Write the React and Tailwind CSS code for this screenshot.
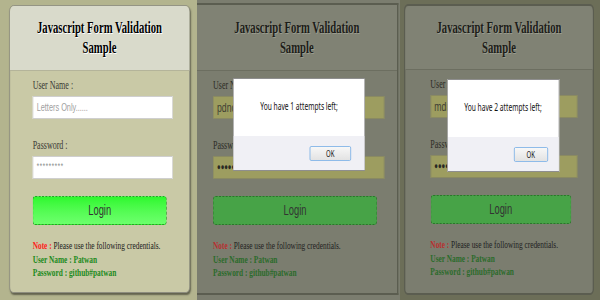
const serif = { fontFamily: '"Liberation Serif", "Times New Roman", serif' };

const panels = [
  {
    outer: 'w-[197px] bg-[#b3b48e]',
    inner: 'w-[295.5px]',
    card: 'ml-[13.5px] mt-[5px] w-[271.5px] h-[288px] rounded-[6px] border border-[#8b8b80] shadow-[1px_2px_2px_rgba(0,0,0,0.45)] bg-[#c9c9a6]',
    head: 'h-[65px] bg-[#d9dacb] border-b border-[#b4b49a] rounded-t-[6px]',
    title: 'text-black [text-shadow:1px_1px_0_#fff]',
    pad: 'px-[34.5px]',
    inputW: 'w-[210px]',
    btnW: 'w-[201px]',
    input: 'bg-white border border-[#cfcfcf]',
    btn: 'bg-gradient-to-b from-[#2cf82c] to-[#6cff6c] border-[#2b9b2b]',
    label: 'text-[#3a3a34]',
    red: 'text-[#ff1a1a]',
    green: 'text-[#1b8a1b]',
    body: 'text-[#1a1a1a]',
    user: '',
    userPh: 'Letters Only......',
    pass: null,
    dialog: null,
  },
  {
    outer: 'w-[203px] bg-[#7b7d6f]',
    inner: 'w-[304.5px]',
    card: 'ml-0 mt-[3px] w-[301.5px] h-[292px] border-t-2 border-b-2 border-r-2 border-[#5b5d50] bg-[#7b7d6f]',
    head: 'h-[66px] bg-[#808274] border-b border-[#6c6e60]',
    title: 'text-[#1d1d19] [text-shadow:1px_1px_0_#9a9c8e]',
    pad: 'px-[24px]',
    inputW: 'w-[256.5px]',
    btnW: 'w-[246px]',
    input: 'bg-[#9d9d60] border border-[#8a8a62]',
    btn: 'bg-[#47a347] border-[#2c742c]',
    label: 'text-[#2c2c26]',
    red: 'text-[#b83030]',
    green: 'text-[#2b6b2b]',
    body: 'text-[#222]',
    user: 'pdnc',
    userPh: '',
    pass: '●●●●●●',
    dialog: { box: 'left-[54px] w-[198px]', ok: 'ml-[114px] w-[61.5px]', n: 1 },
  },
  {
    outer: 'w-[200px] bg-[#6c6e58]',
    inner: 'w-[300px]',
    card: 'ml-[6px] mt-[4px] w-[285px] h-[291px] rounded-[6px] border-2 border-[#5b5d50] bg-[#7b7d6f]',
    head: 'h-[64px] bg-[#808274] border-b border-[#6c6e60] rounded-t-[6px]',
    title: 'text-[#1d1d19] [text-shadow:1px_1px_0_#9a9c8e]',
    pad: 'px-[37.5px]',
    inputW: 'w-[220px]',
    btnW: 'w-[211px]',
    input: 'bg-[#9d9d60] border border-[#8a8a62]',
    btn: 'bg-[#47a347] border-[#2c742c]',
    label: 'text-[#2c2c26]',
    red: 'text-[#b83030]',
    green: 'text-[#2b6b2b]',
    body: 'text-[#222]',
    user: 'mdn',
    userPh: '',
    pass: '●●●●●●',
    dialog: { box: 'left-[70.5px] w-[168px]', ok: 'ml-[99px] w-[51px]', n: 2 },
  },
];

function Dialog({ d }) {
  return (
    <div className={`absolute top-[75px] h-[93px] bg-white border border-[#8e8e8e] flex flex-col ${d.box}`}>
      <div className="h-[57px] pb-[2px] flex items-center justify-center text-[10px] text-[#111]">
        You have {d.n} attempts left;
      </div>
      <div className="flex-1 bg-[#f0f0f5] pt-[10px]">
        <div className={`h-[15px] border border-[#7ab0e6] rounded-[2px] bg-gradient-to-b from-[#f7f7f7] to-[#e3e3e3] flex items-center justify-center text-[9px] text-[#111] ${d.ok}`}>
          OK
        </div>
      </div>
    </div>
  );
}

function Panel({ p }) {
  return (
    <div className={`h-[300px] overflow-hidden shrink-0 ${p.outer}`}>
      <div className={`relative h-[300px] origin-top-left scale-x-[0.6667] ${p.inner}`}>
        <div className={p.card}>
          <div className={`flex items-center justify-center text-center ${p.head}`}>
            <h1 className={`text-[16px] leading-[20px] font-bold ${p.title}`} style={serif}>
              Javascript Form Validation
              <br />
              Sample
            </h1>
          </div>
          <div className={`pt-[7px] ${p.pad}`} style={serif}>
            <div className={`text-[12px] leading-[14px] ${p.label}`}>User Name :</div>
            <div
              className={`mt-[4px] h-[23px] flex items-center px-[5px] text-[13px] ${p.inputW} ${p.input}`}
              style={{ fontFamily: '"Liberation Sans", Arial, sans-serif' }}
            >
              {p.user ? (
                <span className="text-[#3e3e33]">{p.user}</span>
              ) : (
                <span className="text-[#a0a0a0] text-[11px]">{p.userPh}</span>
              )}
            </div>
            <div className={`mt-[19px] text-[12px] leading-[14px] ${p.label}`}>Password :</div>
            <div
              className={`mt-[4px] h-[23px] flex px-[5px] ${p.inputW} ${p.input}`}
              style={{ fontFamily: '"Liberation Sans", Arial, sans-serif' }}
            >
              {p.pass ? (
                <span className="self-center text-[9px] text-[#2a2a24]">{p.pass}</span>
              ) : (
                <span className="pt-[3px] text-[9px] text-[#888] tracking-[1px]">*********</span>
              )}
            </div>
            <button
              className={`mt-[17px] h-[29px] rounded-[4px] border border-dashed text-[14px] text-[#333] ${p.btnW} ${p.btn}`}
              style={{ fontFamily: '"Liberation Sans", Arial, sans-serif' }}
            >
              Login
            </button>
            <div className="mt-[14px] text-[11px] leading-[13.5px]">
              <p className={p.body}>
                <b className={p.red}>Note :</b> Please use the following credentials.
              </p>
              <p className={`font-bold ${p.green}`}>User Name : Patwan</p>
              <p className={`font-bold ${p.green}`}>Password : github#patwan</p>
            </div>
          </div>
        </div>
        {p.dialog && <Dialog d={p.dialog} />}
      </div>
    </div>
  );
}

export default function App() {
  return (
    <div className="w-[600px] h-[300px] flex overflow-hidden">
      {panels.map((p, i) => (
        <Panel key={i} p={p} />
      ))}
    </div>
  );
}
